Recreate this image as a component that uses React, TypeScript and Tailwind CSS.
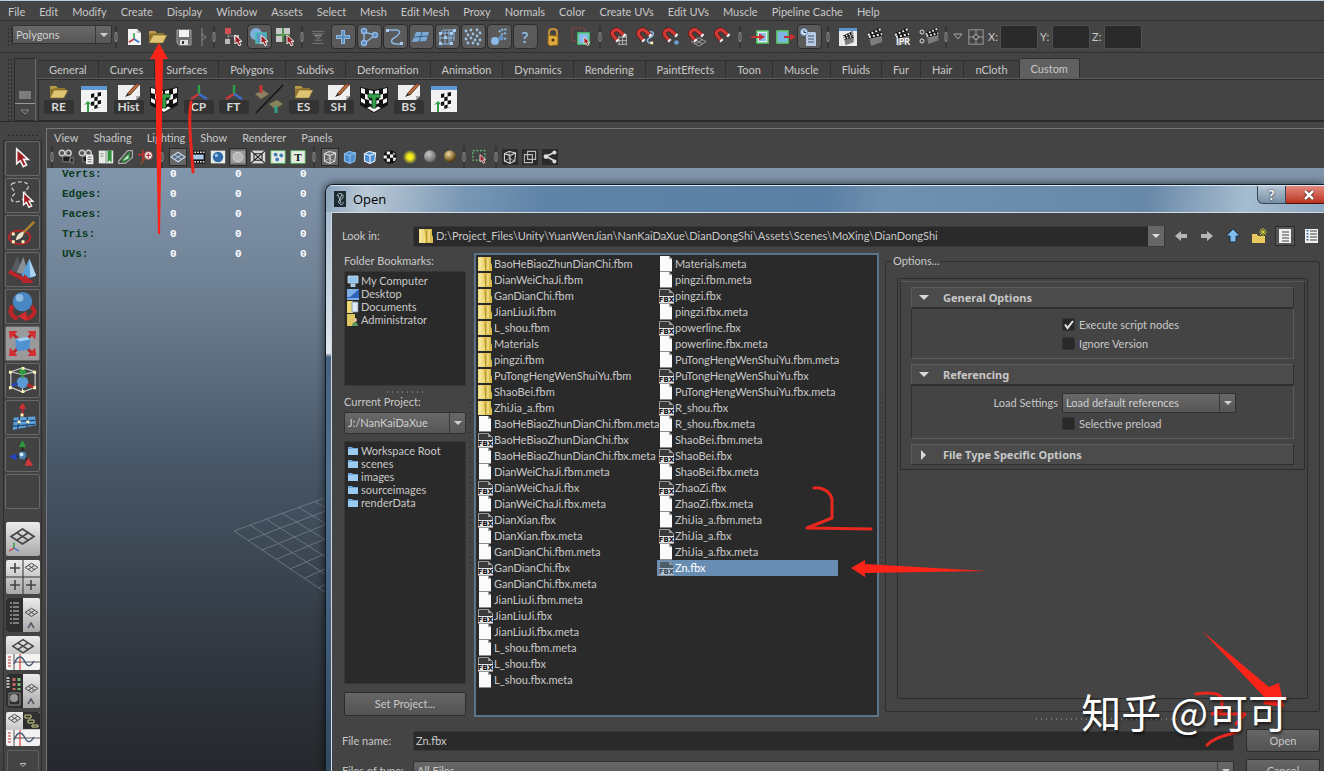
import type { ReactNode } from "react";
import clsx from "clsx";

/* ---------- data ---------- */

const mainMenu = [
  "File", "Edit", "Modify", "Create", "Display", "Window", "Assets", "Select", "Mesh",
  "Edit Mesh", "Proxy", "Normals", "Color", "Create UVs", "Edit UVs", "Muscle",
  "Pipeline Cache", "Help",
];

const shelfTabs = [
  "General", "Curves", "Surfaces", "Polygons", "Subdivs", "Deformation", "Animation",
  "Dynamics", "Rendering", "PaintEffects", "Toon", "Muscle", "Fluids", "Fur", "Hair",
  "nCloth", "Custom",
];

const panelMenu = ["View", "Shading", "Lighting", "Show", "Renderer", "Panels"];

const hudRows = ["Verts:", "Edges:", "Faces:", "Tris:", "UVs:"];

const fileColumns = [
  [
    "BaoHeBiaoZhunDianChi.fbm", "DianWeiChaJi.fbm", "GanDianChi.fbm", "JianLiuJi.fbm",
    "L_shou.fbm", "Materials", "pingzi.fbm", "PuTongHengWenShuiYu.fbm", "ShaoBei.fbm",
    "ZhiJia_a.fbm", "BaoHeBiaoZhunDianChi.fbm.meta", "BaoHeBiaoZhunDianChi.fbx",
    "BaoHeBiaoZhunDianChi.fbx.meta", "DianWeiChaJi.fbm.meta", "DianWeiChaJi.fbx",
    "DianWeiChaJi.fbx.meta", "DianXian.fbx", "DianXian.fbx.meta", "GanDianChi.fbm.meta",
    "GanDianChi.fbx", "GanDianChi.fbx.meta", "JianLiuJi.fbm.meta", "JianLiuJi.fbx",
    "JianLiuJi.fbx.meta", "L_shou.fbm.meta", "L_shou.fbx", "L_shou.fbx.meta",
  ],
  [
    "Materials.meta", "pingzi.fbm.meta", "pingzi.fbx", "pingzi.fbx.meta", "powerline.fbx",
    "powerline.fbx.meta", "PuTongHengWenShuiYu.fbm.meta", "PuTongHengWenShuiYu.fbx",
    "PuTongHengWenShuiYu.fbx.meta", "R_shou.fbx", "R_shou.fbx.meta", "ShaoBei.fbm.meta",
    "ShaoBei.fbx", "ShaoBei.fbx.meta", "ZhaoZi.fbx", "ZhaoZi.fbx.meta", "ZhiJia_a.fbm.meta",
    "ZhiJia_a.fbx", "ZhiJia_a.fbx.meta", "Zn.fbx",
  ],
];

const projectFolders = ["Workspace Root", "scenes", "images", "sourceimages", "renderData"];

/* ---------- icon pieces ---------- */

interface IconProps {
  children: ReactNode;
  className?: string;
  box?: string;
}

function Icon({ children, className = "size-5", box = "0 0 20 20" }: IconProps) {
  return (
    <svg className={clsx("shrink-0", className)} viewBox={box} fill="none" aria-hidden="true">
      {children}
    </svg>
  );
}

/** Red select arrow with a white rim, tip at x,y */
function Cursor({ x, y, s = 1 }: { x: number; y: number; s?: number }) {
  return (
    <path
      transform={`translate(${x} ${y}) scale(${s})`}
      d="M0 0v9l2.2-1.8 1.8 3.6 2-1-1.8-3.4H7z"
      fill="#a01c22"
      stroke="#f2f2f2"
      strokeWidth="1"
    />
  );
}

function Axes({ x, y, s = 1 }: { x: number; y: number; s?: number }) {
  return (
    <g transform={`translate(${x} ${y}) scale(${s})`} strokeWidth="2.4">
      <path d="M0 0V-9" stroke="#2fa043" />
      <path d="M0 0l-8 5" stroke="#c8383e" />
      <path d="M0 0l8 5" stroke="#3a6fd0" />
    </g>
  );
}

function Magnet() {
  return (
    <g>
      <path d="M7.500 13L4 9c-4-4 2-9 6-6l5 4.500" stroke="#5a1412" strokeWidth="5" />
      <path d="M7.500 13L4 9c-4-4 2-9 6-6l5 4.500" stroke="#cf3a34" strokeWidth="3.600" />
      <path d="M7.500 13l1.500 1.700M15 7.500l1.700 1.500" stroke="#f2f2f2" strokeWidth="4" />
    </g>
  );
}

function Diamond() {
  return (
    <g stroke="#474747" strokeWidth="1.3">
      <path d="M10 3l8.500 5.500-8.500 5.500L1.500 8.500z" />
      <path d="M5.800 5.800l8.400 5.400M14.200 5.800L5.800 11.200" />
    </g>
  );
}

function Clapper() {
  return (
    <g>
      <path d="M4 9l13-2v8L6 19z" fill="#7c7c7c" />
      <path d="M3 8l13-6M4 10l13-3" stroke="#111" strokeWidth="3.400" />
      <path d="M3 8l13-6M4 10l13-3" stroke="#eee" strokeWidth="2" strokeDasharray="2 2" />
    </g>
  );
}

function FolderOpen({ className = "size-5" }: { className?: string }) {
  return (
    <Icon className={className}>
      <path d="M1 4h6l2 2h7v3H1z" fill="#b99a45" />
      <path d="M1 7v9h1l4-8h10V6H9z" fill="#8d7430" />
      <path d="M1 16l4-8h14l-4 8z" fill="#dfc573" stroke="#7a6122" strokeWidth=".6" />
    </Icon>
  );
}

function Cube({ fill = "none", line = "#ddd" }: { fill?: string; line?: string }) {
  return (
    <g fill={fill} stroke={line} strokeWidth="1.3" strokeLinejoin="round">
      <path d="M3 6l6-3 8 2-1 10-6 3-7-3z" />
      <path d="M3 6l7 2 7-3M10 8v10" />
      {fill === "none" && <path d="M9 3v9l-6 3M9 12l7 3" strokeWidth=".7" />}
    </g>
  );
}

function Ball({ id, from, to }: { id: string; from: string; to: string }) {
  return (
    <Icon className="size-4">
      <defs>
        <radialGradient id={id} cx=".38" cy=".32" r=".7">
          <stop offset="0" stopColor={from} />
          <stop offset="1" stopColor={to} />
        </radialGradient>
      </defs>
      <circle cx="10" cy="9" r="7.500" fill={`url(#${id})`} />
    </Icon>
  );
}

/* ---------- main toolbar ---------- */

function Separator({ className = "w-2" }: { className?: string }) {
  return (
    <span className={clsx("flex shrink-0 justify-center", className)}>
      <svg className="h-6 w-2" viewBox="0 0 8 24" fill="none" aria-hidden="true">
        <path d="M4 1v22" stroke="#262626" />
        <path d="M3 9v6l1 2 1-2V9L4 7z" stroke="#8c8c8c" fill="#3c3c3c" />
      </svg>
    </span>
  );
}

interface ToolProps {
  label: string;
  className?: string;
  pressed?: boolean;
  children: ReactNode;
}

function Tool({ label, className = "w-[26px]", pressed, children }: ToolProps) {
  return (
    <button
      type="button"
      title={label}
      aria-label={label}
      className={clsx("flex h-7 shrink-0 items-center justify-center", className)}
    >
      <span
        className={clsx(
          "flex size-[25px] shrink-0 items-center justify-center rounded-sm",
          pressed && "border border-[#2c2c2c] bg-[#5a5a5a]",
        )}
      >
        {children}
      </span>
    </button>
  );
}

function ComboArrow({ className = "w-4" }: { className?: string }) {
  return (
    <span
      className={clsx(
        "pointer-events-none absolute inset-y-0 right-0 flex items-center justify-center border-l border-[#383838]",
        className,
      )}
    >
      <svg className="h-1 w-2" viewBox="0 0 8 4" aria-hidden="true">
        <path d="M0 0h8L4 4z" fill="#d0d0d0" />
      </svg>
    </span>
  );
}

interface ComboProps {
  id: string;
  label: string;
  value: string;
  className?: string;
}

function Combo({ id, label, value, className }: ComboProps) {
  return (
    <div
      className={clsx(
        "relative rounded-xs border border-[#303030] bg-linear-to-b from-[#686868] to-[#565656]",
        className,
      )}
    >
      <select
        id={id}
        aria-label={label}
        defaultValue={value}
        className="block size-full appearance-none px-[3px] text-[#cfcfcf] outline-none"
      >
        <option>{value}</option>
      </select>
      <ComboArrow />
    </div>
  );
}

const snapTools: { label: string; extra: ReactNode }[] = [
  { label: "Snap to grids", extra: <path d="M9 10h10M9 14h10M9 18h10M10 10v9M14 7v12M18 7v12" stroke="#bbb" /> },
  {
    label: "Snap to curves",
    extra: (
      <>
        <path d="M13 5c9-3 7 4 2 6-4 2-3 6 3 6" stroke="#8ab6e0" strokeWidth="1.700" />
        <path d="M16 15h3v3h-3z" fill="#fff6b0" />
      </>
    ),
  },
  { label: "Snap to points", extra: <circle cx="16" cy="16" r="2.500" fill="#6d9fd0" /> },
  { label: "Snap to view planes", extra: <path d="M4 15l8-4 8 4-8 5zM8 13l8 4.500M16 13l-8 4.500" stroke="#aaa" /> },
  { label: "Make live", extra: null },
];

const maskTools: { label: string; icon: ReactNode }[] = [
  {
    label: "Handles",
    icon: (
      <>
        <path d="M10 3v14M3 10h14" stroke="#8bb8e4" strokeWidth="4" />
        <path d="M10 4v12M4 10h12" stroke="#5783b0" strokeWidth="1.500" />
      </>
    ),
  },
  {
    label: "Joints",
    icon: (
      <g stroke="#8bb8e4" strokeWidth="1.500">
        <path d="M5 4v12M5 5l11 3M16 8L6 16" />
        <g fill="#5b88b8">
          <circle cx="5" cy="4" r="2.500" />
          <circle cx="16" cy="8" r="2.500" />
          <circle cx="5" cy="16" r="2.500" />
        </g>
      </g>
    ),
  },
  {
    label: "Curves",
    icon: (
      <g>
        <path d="M2 3h8c9 0 3 6-1 8s-3 6 2 6h5" stroke="#8bb8e4" strokeWidth="1.400" />
        <path d="M1 2h3v3H1zM15 15h3v3h-3z" fill="#a9cdf0" />
      </g>
    ),
  },
  {
    label: "Surfaces",
    icon: (
      <g>
        <path d="M5 5h13l-3 9-14 1z" fill="#7ba9d6" />
        <path d="M3 10l14-1M11 5l-3 10" stroke="#3e5f83" />
      </g>
    ),
  },
  {
    label: "Deformations",
    icon: (
      <g>
        <path d="M3 6h11v11H3zM6 3h11v11M3 11h14M8 4v13M12 3v14M14 6l3-3M3 6l3-3" stroke="#8bb8e4" />
        <path d="M2 5h3v3H2zM13 5h3v3h-3zM2 15h3v3H2zM13 15h3v3h-3zM16 2h3v3h-3zM7 9h3v3H7z" fill="#a9cdf0" />
      </g>
    ),
  },
  {
    label: "Dynamics",
    icon: (
      <g fill="#9cc4ea">
        {[[3, 4], [8, 3], [14, 3], [17, 6], [5, 8], [10, 7], [14, 9], [3, 12], [8, 11], [12, 13], [17, 13], [5, 16], [10, 16], [15, 17]].map(
          ([x, y]) => (
            <circle key={`${x}-${y}`} cx={x} cy={y} r="1.400" />
          ),
        )}
      </g>
    ),
  },
  {
    label: "Rendering",
    icon: (
      <g>
        <circle cx="6" cy="14" r="4" fill="#8bb8e4" />
        <circle cx="12" cy="11" r="2.500" fill="#5e8fc0" />
        <path d="M10 5c3-3 6-3 8-2M12 8c3-2 5-2 6-1M15 12l3-1" stroke="#8bb8e4" strokeWidth="2" strokeDasharray="2 1" />
      </g>
    ),
  },
  {
    label: "Miscellaneous",
    icon: (
      <text x="10" y="16" textAnchor="middle" fontSize="16" fontWeight="700" fill="#8bb8e4">
        ?
      </text>
    ),
  },
];

function StatusLine() {
  return (
    <div className="flex h-[33px] shrink-0 items-center overflow-hidden border-y border-t-[#2e2e2e] border-b-[#303030]">
      <Grip className="ml-[7px] w-[5px]" />
      <Combo id="menu-set" label="Menu set" value="Polygons" className="mb-1 h-[19px] w-[100px]" />
      <Separator />
      <Tool label="New scene" className="w-7">
        <Icon>
          <path d="M4 2h9l4 4v12H4z" fill="#f4f4f4" />
          <path d="M13 2v4h4" fill="#bbb" />
          <Axes x={10} y={12} s={0.65} />
        </Icon>
      </Tool>
      <Tool label="Open scene" className="w-5">
        <FolderOpen />
      </Tool>
      <Tool label="Save scene" className="w-8">
        <Icon>
          <path d="M3 3h14v15H5l-2-2z" fill="#6f6f6f" stroke="#a0a0a0" />
          <path d="M5 3h10v7H5z" fill="#f0f0f0" />
          <path d="M6 13h8v5H6z" fill="#ddd" />
          <path d="M8 14h2v3H8z" fill="#333" />
        </Icon>
      </Tool>
      <span className="flex w-2 justify-center">
        <svg className="h-5 w-2" viewBox="0 0 8 20" fill="none" aria-hidden="true">
          <path d="M2 1v18M2 7l4 3-4 3" stroke="#8a8a8a" />
        </svg>
      </span>
      <Separator className="w-3" />
      <Tool label="Select by hierarchy">
        <Icon>
          <path d="M2 1h6v6H2z" fill="#d05055" />
          <path d="M2 12h5v5H2zM11 8h5v5h-5z" fill="#bbb" />
          <path d="M5 7v5M5 9h6" stroke="#888" />
          <Cursor x={12} y={8} />
        </Icon>
      </Tool>
      <Tool label="Select by object type" pressed>
        <Icon>
          <circle cx="7" cy="7" r="6" fill="#7fb0dc" />
          <path d="M7 6h10v10H7z" fill="#5f95c8" stroke="#48c0b0" strokeWidth="1.500" />
          <Cursor x={12} y={8} />
        </Icon>
      </Tool>
      <Tool label="Select by component type">
        <Icon>
          <path d="M1 1h6v6H1zM9 1h6v6H9zM1 9h6v6H1z" fill="#c8c8c8" />
          <path d="M1 8h14M8 1v14" stroke="#58a858" strokeWidth="1.500" />
          <Cursor x={12} y={8} />
        </Icon>
      </Tool>
      <Separator />
      <Tool label="Set object selection mask" className="w-6">
        <Icon className="size-4">
          <path d="M3 3h14M3 6h14M5 14h10M3 18h14" stroke="#888" />
          <path d="M6 8h8l-4 4z" stroke="#aaa" />
        </Icon>
      </Tool>
      {maskTools.map((tool) => (
        <Tool key={tool.label} label={tool.label} pressed>
          <Icon>{tool.icon}</Icon>
        </Tool>
      ))}
      <Tool label="Lock selection" className="w-[30px]">
        <Icon>
          <path d="M6 10V5c0-4 8-4 8 0v5" stroke="#c8923a" strokeWidth="2" />
          <path d="M5 8l10 1v9l-8 1-2-2z" fill="#e0a93e" stroke="#8a5f18" />
          <circle cx="10" cy="13" r="1.500" fill="#4b330c" />
        </Icon>
      </Tool>
      <Tool label="Highlight selection mode">
        <Icon>
          <path d="M1 1h13v13H1z" stroke="#b04045" strokeDasharray="2 1.500" />
          <path d="M7 6h11v11H7z" fill="#86b9ec" stroke="#4fd07a" strokeWidth="1.500" />
          <Cursor x={13} y={10} s={0.8} />
        </Icon>
      </Tool>
      <Separator className="w-3" />
      {snapTools.map((tool) => (
        <Tool key={tool.label} label={tool.label}>
          <Icon box="-1 -1 22 22">
            {tool.extra}
            <Magnet />
          </Icon>
        </Tool>
      ))}
      <Separator />
      <Tool label="Inputs" className="w-8">
        <Icon>
          <path d="M7 4h11v12H7z" fill="#dfeefa" stroke="#5fce6c" strokeWidth="1.600" />
          <path d="M9 6h7v8H9z" fill="#8dbce6" />
          <path d="M1 10h9" stroke="#c32f33" strokeWidth="2" />
          <path d="M9 6.500l6 3.500-6 3.500z" fill="#c32f33" />
        </Icon>
      </Tool>
      <Tool label="Outputs" className="w-5">
        <Icon>
          <path d="M1 4h11v12H1z" fill="#7db4e6" stroke="#5fce6c" strokeWidth="1.600" />
          <path d="M8 10h7" stroke="#c32f33" strokeWidth="2" />
          <path d="M14 6.500l6 3.500-6 3.500z" fill="#c32f33" />
        </Icon>
      </Tool>
      <Tool label="Construction history" pressed>
        <Icon>
          <path d="M7 5h9l1 1v13H7z" fill="#b9cbe0" />
          <path d="M9 9h6M9 12h6M9 15h6" stroke="#3b5878" />
          <circle cx="5" cy="5" r="3.500" fill="#cfe2f5" stroke="#6a92bd" />
          <path d="M5 3v2.500h2" stroke="#234" />
        </Icon>
      </Tool>
      <Separator className="w-3" />
      <Tool label="Render view" className="w-[27px]">
        <Icon>
          <path d="M1 1h18v18H1z" fill="#ececec" />
          <path d="M1 1h18v3H1z" fill="#5c94cc" />
          <g transform="translate(3 4) scale(.75)">
            <Clapper />
          </g>
        </Icon>
      </Tool>
      <Tool label="Render current frame" className="w-[27px]">
        <Icon>
          <Clapper />
        </Icon>
      </Tool>
      <Tool label="IPR render" className="w-[27px]">
        <Icon>
          <Clapper />
          <text x="11" y="18" textAnchor="middle" fontSize="9" fontWeight="700" fill="#f4f4f4">
            IPR
          </text>
        </Icon>
      </Tool>
      <Tool label="Render settings" className="w-[27px]">
        <Icon>
          <g transform="translate(4 0) scale(.9)">
            <Clapper />
          </g>
          <circle cx="3" cy="5" r="2" stroke="#ddd" />
          <circle cx="3" cy="14" r="2" stroke="#ddd" />
        </Icon>
      </Tool>
      <Separator />
      <Tool label="Input line mode" className="w-4">
        <Icon className="h-2 w-3" box="0 0 12 8">
          <path d="M2 1h8L6 6z" stroke="#aaa" />
        </Icon>
      </Tool>
      <Tool label="Absolute transform" className="w-5">
        <Icon className="size-4">
          <path d="M1 1h18v18H1zM10 1v18M1 10h18" stroke="#b0b0b0" />
          <circle cx="10" cy="10" r="3" fill="#444" stroke="#ccc" />
        </Icon>
      </Tool>
      {["X", "Y", "Z"].map((axis) => (
        <label key={axis} className="flex shrink-0 items-center">
          <span className="w-[14px] pl-[2px]">{axis}:</span>
          <input
            type="text"
            aria-label={`${axis} value`}
            className="h-6 w-[38px] rounded-xs border border-[#4f4f4f] bg-[#2a2a2a]"
          />
        </label>
      ))}
    </div>
  );
}

function Grip({ className }: { className?: string }) {
  return (
    <span
      className={clsx(
        "h-5 shrink-0 bg-[radial-gradient(circle,#2a2a2a_1px,transparent_1px)] bg-[size:3px_4px]",
        className,
      )}
    />
  );
}

/* ---------- shelf ---------- */

function PencilIcon() {
  return (
    <Icon className="h-4 w-6" box="0 0 24 16">
      <path d="M1 1h22v11l-4 4H1z" fill="#efefef" />
      <path d="M23 12h-4v4z" fill="#aaa" />
      <path d="M10 10l9-10h4L13 11z" fill="#b86a3c" stroke="#4c2411" strokeWidth=".8" />
      <path d="M8 13l2-3 3 1z" fill="#222" />
    </Icon>
  );
}

function UvWindowIcon() {
  return (
    <Icon className="size-[28px]" box="0 0 28 28">
      <path d="M1 1h26v26H1z" fill="#f2f2f2" />
      <path d="M1 1h26v4H1z" fill="#5e98d2" />
      <path d="M11 9l10-2v15l-10 3z" fill="#111" />
      <path d="M14.300 8.300l3.300-.700v4l-3.300.7zM11 13l3.300-.700v4l-3.300.8zM17.600 11.600l3.400-.700v4l-3.400.8zM14.300 16.300l3.300-.700v4l-3.300.8zM11 21l3.300-.800v4L11 25zM17.600 19.600l3.400-.800V22l-3.400 1z" fill="#fff" />
      <path d="M4 20l4-4 4 4-3-1v8H7v-8z" fill="#2f9b45" />
    </Icon>
  );
}

function CheckerCubeIcon() {
  return (
    <Icon className="size-[30px]" box="0 0 30 30">
      <path d="M1 3l14 3 14-3v18l-14 8L1 21z" fill="#111" />
      <g fill="#f4f4f4">
        <path d="M2 4l4 1v5l-4-1zM10 6l4 1v4l-4-1zM6 10l4 1v5l-4-1zM2 14l4 2v4l-4-2zM10 16l4 1v4l-4-2z" />
        <path d="M28 4l-4 1v5l4-1zM20 6l-4 1v4l4-1zM24 10l-4 1v5l4-1zM28 14l-4 2v4l4-2zM20 16l-4 1v4l4-2z" />
        <path d="M15 24l4-1.500 3 1.500-7 4-7-4 3-1.500z" />
      </g>
      <path d="M9 10h12v4h-4v10h-4V14H9z" fill="#35a04a" stroke="#0d3c18" strokeWidth=".8" />
    </Icon>
  );
}

function AxesIcon() {
  return (
    <Icon className="h-[18px] w-5" box="0 0 20 18">
      <Axes x={10} y={11} />
    </Icon>
  );
}

const shelfItems: { label: string; caption?: string; icon: ReactNode }[] = [
  { label: "Reference", caption: "RE", icon: <FolderOpen /> },
  { label: "UV Texture Editor", icon: <UvWindowIcon /> },
  { label: "Delete history", caption: "Hist", icon: <PencilIcon /> },
  { label: "Checker", icon: <CheckerCubeIcon /> },
  { label: "Center pivot", caption: "CP", icon: <AxesIcon /> },
  { label: "Freeze transformations", caption: "FT", icon: <AxesIcon /> },
  {
    label: "Flip normals",
    icon: (
      <Icon className="size-[30px]" box="0 0 30 30">
        <path d="M29 1L2 29" stroke="#151515" strokeWidth="1.500" />
        <path d="M1 10l8-4 6 4-8 5z" fill="#8b7f62" />
        <path d="M7 1v8" stroke="#c83436" strokeWidth="3" />
        <path d="M15 20l8-4 6 4-8 5z" fill="#8b8258" />
        <path d="M22 22v7" stroke="#2fa083" strokeWidth="3" />
      </Icon>
    ),
  },
  { label: "Export selection", caption: "ES", icon: <FolderOpen /> },
  { label: "Shape", caption: "SH", icon: <PencilIcon /> },
  { label: "Checker cube", icon: <CheckerCubeIcon /> },
  { label: "Blend shape", caption: "BS", icon: <PencilIcon /> },
  { label: "UV snapshot", icon: <UvWindowIcon /> },
];

function Shelf() {
  return (
    <div className="flex h-[69px] shrink-0 border-b border-[#2b2b2b] pt-[5px]">
      <Grip className="ml-[7px] h-16 w-[5px]" />
      <div className="ml-[2px] flex w-[22px] shrink-0 flex-col border border-[#2c2c2c] border-r-[#6a6a6a]">
        <div className="flex flex-1 items-end justify-center border-b border-[#999] pb-1">
          <span className="h-2 w-3 bg-[#7c7c7c]" />
        </div>
        <div className="flex h-4 items-center justify-center">
          <svg className="h-[6px] w-[10px]" viewBox="0 0 10 6" fill="none" aria-hidden="true">
            <path d="M1 1h8L5 5z" stroke="#888" />
          </svg>
        </div>
      </div>
      <div className="ml-[2px] flex min-w-0 flex-1 flex-col">
        <div className="flex h-[21px] items-end border-b border-[#5d5d5d]">
          {shelfTabs.map((tab) => (
            <button
              key={tab}
              type="button"
              className={clsx(
                "border-t border-r border-[#2f2f2f] px-[11px]",
                tab === "Custom" ? "h-5 rounded-t-xs bg-[#606060]" : "h-[18px] bg-[#404040]",
              )}
            >
              {tab}
            </button>
          ))}
        </div>
        <div className="flex flex-1 items-start border-y border-l border-[#2b2b2b] pt-[3px] pl-[2px]">
          {shelfItems.map((item) => (
            <button
              key={item.label}
              type="button"
              title={item.label}
              aria-label={item.label}
              className="flex h-8 w-[35px] shrink-0 flex-col items-center justify-center"
            >
              {item.caption ? (
                <>
                  <span className="flex h-4 items-center">{item.icon}</span>
                  <span className="w-[30px] rounded-xs bg-[#333] text-[12px] leading-[14px] font-bold text-[#d8d8d8]">
                    {item.caption}
                  </span>
                </>
              ) : (
                item.icon
              )}
            </button>
          ))}
        </div>
      </div>
    </div>
  );
}

/* ---------- toolbox ---------- */

const toolboxTools: { label: string; icon: ReactNode }[] = [
  { label: "Select tool", icon: <Cursor x={11} y={7} s={1.7} /> },
  {
    label: "Lasso tool",
    icon: (
      <>
        <path d="M6 5c6-3 18-3 17 3-1 5-5 1-3 8 1 6-12 10-14 6-2-5 6-6 2-10-2-3-4-5-2-7z" stroke="#ccc" strokeWidth="1.300" strokeDasharray="4 2.500" />
        <Cursor x={18} y={14} s={1.4} />
      </>
    ),
  },
  {
    label: "Paint selection tool",
    icon: (
      <>
        <ellipse cx="14" cy="22" rx="11" ry="7" stroke="#b5262a" strokeWidth="2" />
        <path d="M29 6L17 18" stroke="#b08030" strokeWidth="2.500" />
        <path d="M10 25c1-6 4-8 8-9 1 4-2 8-8 9z" fill="#e8e2c8" />
        <path d="M6 17h3v3H6zM6 25h3v3H6zM16 25h3v3h-3z" fill="#fff6b8" />
      </>
    ),
  },
  {
    label: "Move tool",
    icon: (
      <>
        <path d="M12 3L5 18l12 4z" fill="#555b60" />
        <path d="M18 4l-7 16 12 3z" fill="#8a9096" />
        <path d="M24 6l-8 17c4 4 11 3 15 0z" fill="#5a9fd6" />
        <path d="M24 6l1 19c3 0 5-1 6-2z" fill="#a9d4f4" />
        <path d="M3 19l15 8" stroke="#b92529" strokeWidth="4" />
        <path d="M16 31l3-9 10 9z" fill="#b92529" />
      </>
    ),
  },
  {
    label: "Rotate tool",
    icon: (
      <>
        <path d="M7 16c-5 6 0 13 5 13M26 17c8 6 0 13-8 12" stroke="#b92529" strokeWidth="4.500" />
        <circle cx="17" cy="12" r="10" fill="#4887c2" />
        <circle cx="14" cy="8" r="4" fill="#a6cff0" opacity=".7" />
        <path d="M12 27l9-5v10z" fill="#d32f33" />
      </>
    ),
  },
  {
    label: "Scale tool",
    icon: (
      <>
        <path d="M6 6l22 22M28 6L6 28" stroke="#b92529" strokeWidth="3" />
        <path d="M3 4h9l-8 9zM31 4h-9l8 9zM3 30h9l-8-9zM31 30h-9l8-9z" fill="#d32f33" />
        <path d="M10 12l12-2 3 3-1 10-11 2-3-3z" fill="#4f93d2" />
        <path d="M10 12l12-2 3 3-11 2z" fill="#9fcdf2" />
      </>
    ),
  },
  {
    label: "Universal manipulator",
    icon: (
      <>
        <path d="M5 8l12-4 13 4v16l-13 5-12-5zM5 8l12 3 13-3M17 11v18" stroke="#ccc" strokeWidth="1.200" />
        <circle cx="17" cy="19" r="6" fill="#5b9ad4" />
        <path d="M17 15V6M14 9l3-5 3 5z" stroke="#2f9b3c" strokeWidth="2" fill="#2f9b3c" />
        <path d="M12 20l-6 2" stroke="#2c48b8" strokeWidth="3" />
        <path d="M22 21l6 3" stroke="#b92529" strokeWidth="3" />
        <path d="M3 7h3v3H3zM28 7h3v3h-3zM3 23h3v3H3zM28 23h3v3h-3zM16 3h3v3h-3zM16 27h3v3h-3z" fill="#fff6b8" />
      </>
    ),
  },
  {
    label: "Soft modification tool",
    icon: (
      <>
        <path d="M8 17l22-1 1 9-24 5z" fill="#5d9fd8" />
        <path d="M6 21l24-1M5 26l25-2M14 16l-2 13M22 16v11" stroke="#234468" strokeWidth="1.300" />
        <path d="M17 15V7" stroke="#b92529" strokeWidth="2" />
        <path d="M13 8l4-6 4 6z" fill="#d32f33" />
        <path d="M15 13h3v3h-3zM12 20h3v3h-3zM21 20h3v3h-3z" fill="#fff6b8" />
      </>
    ),
  },
  {
    label: "Show manipulator tool",
    icon: (
      <>
        <path d="M17 18V8M17 18l-7 1M17 18l7 6" stroke="#222" strokeWidth="2" />
        <path d="M14 9l3-6 3 6z" fill="#2f9b3c" stroke="#2f9b3c" />
        <path d="M11 16l-8 3 8 4z" fill="#2444c0" />
        <path d="M23 21l4 7-7 0z" fill="#d3383c" stroke="#d3383c" />
        <circle cx="17" cy="18" r="4" fill="#4d7ea8" />
        <circle cx="16" cy="17" r="2" fill="#cfe6fa" />
      </>
    ),
  },
  { label: "Last tool", icon: null },
];

function GraphStrip() {
  return (
    <g>
      <path d="M0 0h34v16H0z" fill="#f3f3f3" />
      <path d="M2 3h3M2 6h3M2 9h3M2 12h3" stroke="#c33" />
      <path d="M8 0v16M8 8h26" stroke="#555" />
      <path d="M14 0v16" stroke="#d22" />
      <path d="M8 10c4-10 8-8 11-2s6 4 9-1" stroke="#455a70" strokeWidth="1.400" />
    </g>
  );
}

function MiniGrid({ x, y, s = 0.8 }: { x: number; y: number; s?: number }) {
  return (
    <g transform={`translate(${x} ${y}) scale(${s})`}>
      <Diamond />
    </g>
  );
}

const layoutButtons: { label: string; icon: ReactNode }[] = [
  {
    label: "Single perspective view",
    icon: (
      <>
        <MiniGrid x={3} y={3} s={1.35} />
        <Axes x={8} y={26} s={0.6} />
      </>
    ),
  },
  {
    label: "Four view",
    icon: (
      <>
        <path d="M9 3v10M4 8h10M9 20v10M4 25h10M25 20v10M20 25h10" stroke="#444" strokeWidth="1.600" />
        <MiniGrid x={18} y={1} s={0.75} />
        <path d="M17 0v34M0 17h34" stroke="#333" />
      </>
    ),
  },
  {
    label: "Outliner and perspective",
    icon: (
      <>
        <path d="M0 0h17v34H0z" fill="#2f2f2f" />
        <path d="M4 5h9M4 9h9M4 13h9M4 17h9M4 21h9M4 25h9" stroke="#ccc" strokeDasharray="2 1 6" />
        <MiniGrid x={18} y={8} s={0.75} />
        <path d="M22 30l3-5 3 5" stroke="#556" strokeWidth="1.500" />
      </>
    ),
  },
  {
    label: "Perspective and graph",
    icon: (
      <>
        <MiniGrid x={5} y={0} s={1.2} />
        <g transform="translate(0 18)">
          <GraphStrip />
        </g>
      </>
    ),
  },
  {
    label: "Hypershade and perspective",
    icon: (
      <>
        <path d="M0 0h17v34H0z" fill="#2f2f2f" />
        <path d="M2 3v12" stroke="#bbb" strokeWidth="3" strokeDasharray="2 1" />
        <path d="M8 4v12" stroke="#c66" strokeWidth="3" strokeDasharray="3 2" />
        <path d="M13 4v12" stroke="#7b7" strokeWidth="3" strokeDasharray="3 2" />
        <circle cx="8" cy="24" r="4" fill="#999" />
        <path d="M3 19h11v12H3z" stroke="#888" />
        <MiniGrid x={18} y={8} s={0.75} />
        <path d="M22 30l3-5 3 5" stroke="#556" strokeWidth="1.500" />
      </>
    ),
  },
  {
    label: "Perspective, hypergraph and graph",
    icon: (
      <>
        <path d="M17 0h17v17H17z" fill="#2f2f2f" />
        <path d="M19 3h6v3h-6zM22 8h6v3h-6zM26 13h6v2h-6z" stroke="#cfcf8a" />
        <MiniGrid x={1} y={0} s={0.75} />
        <g transform="translate(0 18)">
          <GraphStrip />
        </g>
      </>
    ),
  },
];

function Toolbox() {
  return (
    <aside className="flex w-[46px] shrink-0 flex-col overflow-hidden pt-3 pl-[3px]">
      <span className="mb-[2px] ml-1 h-1 w-8 shrink-0 bg-[radial-gradient(circle,#2a2a2a_1px,transparent_1px)] bg-[size:4px_3px]" />
      <div className="flex w-[39px] flex-1 flex-col items-center border border-[#2e2e2e]">
        <div className="flex flex-col gap-[2px]">
          {toolboxTools.map((tool) => (
            <button
              key={tool.label}
              type="button"
              title={tool.label}
              aria-label={tool.label}
              className={clsx(
                "size-[35px] rounded-xs border border-[#686868]",
                tool.label === "Scale tool" ? "bg-[#9a9a9a]" : "bg-[#424242]",
              )}
            >
              <Icon className="size-[33px]" box="0 0 34 34">
                {tool.icon}
              </Icon>
            </button>
          ))}
        </div>
        <div className="mt-[13px] flex flex-col gap-1">
          {layoutButtons.map((button) => (
            <button
              key={button.label}
              type="button"
              title={button.label}
              aria-label={button.label}
              className="size-[34px] overflow-hidden rounded-xs bg-linear-to-b from-[#ececec] to-[#a8a8a8]"
            >
              <Icon className="size-[34px]" box="0 0 34 34">
                {button.icon}
              </Icon>
            </button>
          ))}
        </div>
        <button
          type="button"
          aria-label="More layouts"
          className="mt-1 flex h-8 w-8 shrink-0 justify-center rounded-xs border border-[#606060] pt-3"
        >
          <svg className="h-1 w-[6px]" viewBox="0 0 6 4" fill="none" aria-hidden="true">
            <path d="M0 .5h6L3 3.500z" stroke="#bbb" />
          </svg>
        </button>
      </div>
    </aside>
  );
}

/* ---------- viewport ---------- */

function PanelTool({ label, className = "w-5", pressed, children }: ToolProps) {
  return (
    <button
      type="button"
      title={label}
      aria-label={label}
      className={clsx("flex h-[18px] shrink-0 items-center justify-center", className)}
    >
      <span
        className={clsx(
          "flex size-[18px] items-center justify-center",
          pressed && "border border-[#2a2a2a] bg-[#666]",
        )}
      >
        {children}
      </span>
    </button>
  );
}

function Tile({ children, fill = "#e4ece4" }: { children: ReactNode; fill?: string }) {
  return (
    <Icon className="size-4">
      <path d="M1 2h18v16H1z" fill={fill} />
      {children}
    </Icon>
  );
}

function CameraShape() {
  return (
    <>
      <circle cx="5" cy="5" r="3.500" fill="#555" stroke="#ccc" strokeWidth="1.800" />
      <circle cx="13" cy="5" r="3.500" fill="#555" stroke="#ccc" strokeWidth="1.800" />
      <path d="M6 9h9v7H6zM15 12l4-2v8l-4-2z" fill="#1c1c1c" stroke="#aaa" strokeWidth=".8" />
    </>
  );
}

function PanelToolbar() {
  return (
    <div className="flex h-[21px] shrink-0 items-center pb-[2px] pl-px">
      <Separator />
      <PanelTool label="Select camera">
        <Icon className="size-4">
          <CameraShape />
        </Icon>
      </PanelTool>
      <PanelTool label="Camera attributes">
        <Icon className="size-4">
          <CameraShape />
          <path d="M10 7h9v12h-9z" fill="#eee" />
          <path d="M12 10h5M12 13h5M12 16h5" stroke="#555" />
        </Icon>
      </PanelTool>
      <PanelTool label="Bookmarks">
        <Tile>
          <path d="M10 2v16M3 6h4M3 9h4" stroke="#777" />
          <path d="M12 2h5v15l-2.500-3-2.500 3z" fill="#2f8f3f" />
        </Tile>
      </PanelTool>
      <PanelTool label="Image plane">
        <Icon className="size-4">
          <path d="M1 15L12 2h6v9L9 18H1z" stroke="#aaa" strokeWidth="1.500" />
          <path d="M6 13l8-8v7l-8 4z" fill="#d8e8d8" stroke="#2f8f3f" strokeWidth="1.800" />
        </Icon>
      </PanelTool>
      <PanelTool label="2D pan/zoom">
        <Icon className="size-4">
          <path d="M6 1v13M0 7h12" stroke="#c03236" strokeWidth="2" />
          <circle cx="13" cy="8" r="5" fill="#f0f0f0" stroke="#a33" />
          <path d="M10 8h6M13 5v6" stroke="#b33" strokeWidth="1.500" />
          <path d="M9 12l-6 7" stroke="#8a4a2a" strokeWidth="2" />
        </Icon>
      </PanelTool>
      <Separator className="w-3" />
      <PanelTool label="Grid" pressed>
        <Icon className="size-4">
          <path d="M10 4l9 6-9 6-9-6z" fill="#5a6c80" stroke="#cddcec" strokeWidth="1.300" />
          <path d="M5.500 7l9 6M14.500 7l-9 6" stroke="#cddcec" />
        </Icon>
      </PanelTool>
      <PanelTool label="Film gate">
        <Icon className="size-4">
          <path d="M1 2h18v16H1z" fill="#111" />
          <path d="M2 4h16M2 16h16" stroke="#eee" strokeWidth="2" strokeDasharray="2 1.500" />
          <path d="M3 7h14v6H3z" fill="#a9c8e8" />
        </Icon>
      </PanelTool>
      <PanelTool label="Resolution gate">
        <Tile>
          <circle cx="10" cy="10" r="6.500" fill="#2f6bab" />
          <circle cx="8" cy="8" r="2" fill="#9dc6ee" />
        </Tile>
      </PanelTool>
      <PanelTool label="Gate mask" pressed>
        <Tile fill="#9a9a9a">
          <circle cx="10" cy="10" r="6" fill="#b8b8b8" stroke="#ddd" />
        </Tile>
      </PanelTool>
      <PanelTool label="Field chart">
        <Tile fill="#d8d8d8">
          <path d="M1 2l18 16M19 2L1 18M5 6h10v8H5z" stroke="#222" strokeWidth="1.300" />
        </Tile>
      </PanelTool>
      <PanelTool label="Safe action">
        <Tile>
          <circle cx="7" cy="7" r="2.300" fill="#3d7ab8" />
          <circle cx="14" cy="8" r="2.300" fill="#3d7ab8" />
          <circle cx="9" cy="13" r="2.300" fill="#3d7ab8" />
          <path d="M1 2h18v16H1z" stroke="#4caf50" />
        </Tile>
      </PanelTool>
      <PanelTool label="Safe title">
        <Tile>
          <text
            x="10"
            y="15"
            textAnchor="middle"
            fontSize="14"
            fontWeight="700"
            fontFamily="Liberation Serif, serif"
            fill="#111"
          >
            T
          </text>
          <path d="M1 2h18v16H1z" stroke="#4caf50" />
        </Tile>
      </PanelTool>
      <Separator className="w-3" />
      <PanelTool label="Wireframe" pressed>
        <Icon className="size-4">
          <Cube />
        </Icon>
      </PanelTool>
      <PanelTool label="Smooth shade all">
        <Icon className="size-4">
          <Cube fill="#4c8fd0" line="#8fc0ee" />
        </Icon>
      </PanelTool>
      <PanelTool label="Wireframe on shaded">
        <Icon className="size-4">
          <Cube fill="#4c8fd0" line="#f0f6fc" />
        </Icon>
      </PanelTool>
      <PanelTool label="Textured">
        <Icon className="size-4">
          <circle cx="10" cy="10" r="8.500" fill="#111" />
          <path d="M6 3h4v4H6zM10 7h4v4h-4zM2 8h4v4H2zM6 12h4v4H6zM14 4l3 3h-3zM14 11h4l-2 4h-2z" fill="#f2f2f2" />
        </Icon>
      </PanelTool>
      <PanelTool label="Use all lights">
        <Icon className="size-4">
          <defs>
            <radialGradient id="light-glow">
              <stop offset=".35" stopColor="#f4f01c" />
              <stop offset="1" stopColor="#f4f01c" stopOpacity="0" />
            </radialGradient>
          </defs>
          <circle cx="10" cy="10" r="9" fill="url(#light-glow)" />
        </Icon>
      </PanelTool>
      <PanelTool label="Shadows">
        <Ball id="ball-shadow" from="#c8c8c8" to="#666" />
      </PanelTool>
      <PanelTool label="High quality">
        <Ball id="ball-gold" from="#f6dc9a" to="#4a3208" />
      </PanelTool>
      <Separator />
      <PanelTool label="Isolate select" className="w-6">
        <Icon className="size-4">
          <path d="M1 2h15v12H1z" stroke="#5cc070" strokeWidth="1.500" strokeDasharray="2.500 2" />
          <Cursor x={10} y={7} />
        </Icon>
      </PanelTool>
      <Separator />
      <PanelTool label="X-ray">
        <Icon className="size-4">
          <path d="M0 0h20v20H0z" fill="#2a2a2a" />
          <Cube />
        </Icon>
      </PanelTool>
      <PanelTool label="X-ray active components">
        <Icon className="size-4">
          <path d="M0 0h20v20H0z" fill="#2a2a2a" />
          <path d="M3 7h10v10H3zM7 3h10v10H7z" stroke="#bbb" strokeWidth="1.400" />
        </Icon>
      </PanelTool>
      <PanelTool label="X-ray joints">
        <Icon className="size-4">
          <path d="M0 0h20v20H0z" fill="#2a2a2a" />
          <path d="M16 4L5 9l11 6" stroke="#ddd" strokeWidth="2" />
          <g fill="#ddd">
            <circle cx="15.500" cy="4.500" r="2.500" />
            <circle cx="5" cy="9.500" r="3" />
            <circle cx="15.500" cy="15.500" r="2.500" />
          </g>
        </Icon>
      </PanelTool>
    </div>
  );
}

function Viewport() {
  const steps = [0, 1, 2, 3, 4, 5, 6];
  return (
    <div className="relative flex-1 overflow-hidden bg-[linear-gradient(180deg,#8195ac_0%,#6f8194_20%,#475666_50%,#343c46_75%,#25282c_100%)]">
      <svg className="absolute inset-0 size-full" fill="none" aria-hidden="true">
        <g stroke="#8d98a4" strokeWidth="1" opacity=".55">
          {steps.map((i) => (
            <path key={`a${i}`} d={`M${187 + i * 14} ${363 + i * 9.5}l110 ${-40 - i * 2}`} />
          ))}
          {steps.map((i) => (
            <path key={`b${i}`} d={`M${187 + i * 16} ${363 - i * 6}l110 ${74 - i * 2}`} />
          ))}
        </g>
      </svg>
      <div className="-mt-1 w-[325px] pl-[15px] font-['Liberation_Mono',monospace] text-[11px] leading-5 font-bold text-[#0b3b20]">
        {hudRows.map((name) => (
          <div key={name} className="flex">
            <span className="w-[108px]">{name}</span>
            <span className="w-[65px] text-white">0</span>
            <span className="w-[65px] text-white">0</span>
            <span className="text-white">0</span>
          </div>
        ))}
      </div>
    </div>
  );
}

/* ---------- open dialog ---------- */

function FolderIcon() {
  return (
    <Icon className="h-4 w-[14px]" box="0 0 14 16">
      <path d="M0 1h7l1 14H0z" fill="#f0dd82" />
      <path d="M5 1h8v6l1 2v6H7z" fill="#d9bd4f" />
      <path d="M7.500 3v12" stroke="#b8982f" />
      <path d="M2 2v12M10 2v12" stroke="#fbf0b0" />
    </Icon>
  );
}

function PageIcon() {
  return (
    <Icon className="h-4 w-[14px]" box="0 0 14 16">
      <path d="M1 0h9l3 3v12H1z" fill="#fbfbfb" />
      <path d="M10 0v3h3z" fill="#9a9a9a" />
      <path d="M1 15.500h12" stroke="#8a8a8a" />
    </Icon>
  );
}

function FbxIcon() {
  return (
    <Icon className="h-4 w-[15px]" box="0 0 15 16">
      <path d="M.5 15.500V1.500h10l4 4v10z" fill="#3a3a3a" stroke="#9a9a9a" />
      <path d="M10 1v4h4z" fill="#9a9a9a" />
      <path d="M0 8h15v7H0z" fill="#e6e6e6" />
      <text
        x="7.500"
        y="14"
        textAnchor="middle"
        fontSize="7"
        fontWeight="700"
        fontFamily="DejaVu Sans, sans-serif"
        fill="#111"
      >
        FBX
      </text>
    </Icon>
  );
}

function FileIcon({ name }: { name: string }) {
  if (name.endsWith(".meta")) return <PageIcon />;
  if (name.endsWith(".fbx")) return <FbxIcon />;
  return <FolderIcon />;
}

function FileList() {
  return (
    <div className="flex min-w-0 flex-1 border-2 border-[#5b7389] bg-[#2a2a2a] pt-px">
      {fileColumns.map((column, i) => (
        <ul key={i} className="w-[181px]">
          {column.map((name) => (
            <li
              key={name}
              className={clsx(
                "flex h-4 items-center whitespace-nowrap",
                name === "Zn.fbx" && "bg-[#678db2] text-white",
              )}
            >
              <span
                className={clsx(
                  "flex w-[18px] shrink-0 justify-center",
                  name === "Zn.fbx" && "opacity-60",
                )}
              >
                <FileIcon name={name} />
              </span>
              {name}
            </li>
          ))}
        </ul>
      ))}
    </div>
  );
}

const bookmarks: { name: string; icon: ReactNode }[] = [
  {
    name: "My Computer",
    icon: <path d="M1 1h10v7H1zM4 9h4v3H4z" fill="#8fc3ec" stroke="#cfe2f0" strokeWidth=".8" />,
  },
  {
    name: "Desktop",
    icon: (
      <>
        <path d="M0 1h12v9H0z" fill="#2f62b8" />
        <path d="M0 1h12L3 9H0zM0 10h12v2H0z" fill="#7eaee6" />
      </>
    ),
  },
  {
    name: "Documents",
    icon: (
      <>
        <path d="M0 0h6v12H0z" fill="#ecd877" />
        <path d="M5 1h6v10H5z" fill="#dfeaf4" stroke="#7794ad" strokeWidth=".8" />
      </>
    ),
  },
  {
    name: "Administrator",
    icon: (
      <>
        <path d="M0 0h8v12H0z" fill="#dcc45e" />
        <circle cx="8" cy="6" r="2" fill="#e5c09a" />
        <path d="M5 12c0-5 6-5 6 0z" fill="#5d9a60" />
      </>
    ),
  },
];

function PlacesColumn() {
  return (
    <div className="flex w-[122px] shrink-0 flex-col">
      <h2 className="h-[18px] leading-4">Folder Bookmarks:</h2>
      <ul className="h-[115px] border border-[#383838] bg-[#2a2a2a] px-[2px] pt-[2px]">
        {bookmarks.map((item) => (
          <li key={item.name} className="flex h-[13px] items-center gap-[2px]">
            <Icon className="size-3" box="0 0 12 12">
              {item.icon}
            </Icon>
            {item.name}
          </li>
        ))}
      </ul>
      <span className="mx-auto mt-1 h-1 w-10 bg-[radial-gradient(circle,#777_1px,transparent_1px)] bg-[size:5px_4px]" />
      <label htmlFor="project" className="h-[18px] leading-4">
        Current Project:
      </label>
      <Combo id="project" label="Current Project" value="J:/NanKaiDaXue" className="h-[22px]" />
      <ul className="mt-[7px] h-[243px] border border-[#383838] bg-[#2a2a2a] px-[2px] pt-[2px]">
        {projectFolders.map((name) => (
          <li key={name} className="flex h-[13px] items-center gap-[2px]">
            <Icon className="size-3" box="0 0 12 12">
              <path d="M1 2h4l1 1h5v7H1z" fill="#6aa7dc" />
              <path d="M1 4h10v6H1z" fill="#9ccbf2" />
            </Icon>
            {name}
          </li>
        ))}
      </ul>
      <PushButton className="mt-2 h-6">Set Project...</PushButton>
    </div>
  );
}

function PushButton({ className, children }: { className?: string; children: ReactNode }) {
  return (
    <button
      type="button"
      className={clsx(
        "shrink-0 rounded-xs border border-[#2c2c2c] bg-linear-to-b from-[#666] to-[#535353]",
        className,
      )}
    >
      {children}
    </button>
  );
}

function SectionHeader({ title, open }: { title: string; open?: boolean }) {
  return (
    <button
      type="button"
      aria-expanded={!!open}
      className="flex h-[21px] w-full items-center border border-[#2f2f2f] border-t-[#5c5c5c] border-l-[#5c5c5c] bg-[#4b4b4b] pl-[7px] text-left font-['Noto_Sans',sans-serif] font-bold"
    >
      <span className="w-6">
        <svg className="size-[10px]" viewBox="0 0 10 10" aria-hidden="true">
          <path d={open ? "M0 2h10L5 7z" : "M2 0v10l5-5z"} fill="#d8d8d8" />
        </svg>
      </span>
      {title}
    </button>
  );
}

function CheckRow({ label, checked }: { label: string; checked?: boolean }) {
  return (
    <label className="flex h-[19px] items-center pl-[150px]">
      <span className="relative mr-1 flex size-[13px]">
        <input
          type="checkbox"
          defaultChecked={checked}
          className="peer size-[13px] appearance-none rounded-xs border border-[#333] bg-[#282828]"
        />
        <svg
          className="pointer-events-none absolute inset-0 hidden size-[13px] peer-checked:block"
          viewBox="0 0 13 13"
          fill="none"
          aria-hidden="true"
        >
          <path d="M3 6.500l2.500 3.500L11 3" stroke="#e8e8e8" strokeWidth="2" />
        </svg>
      </span>
      {label}
    </label>
  );
}

function OptionsPanel() {
  const box = "border border-[#2f2f2f] border-r-[#5c5c5c] border-b-[#5c5c5c]";
  return (
    <fieldset className="mt-px mb-[5px] flex w-[435px] shrink-0 flex-col rounded-xs border border-[#2e2e2e] px-[11px] pb-3">
      <legend className="-ml-1 leading-[14px]">Options...</legend>
      <div className="mt-[10px] flex-1 rounded-xs border border-[#2c2c2c]">
        <div className="m-[2px] border border-[#2c2c2c] border-t-[#585858] px-[10px] pt-[5px] pb-1">
          <SectionHeader title="General Options" open />
          <div className={clsx("h-[51px] pt-[6px]", box)}>
            <CheckRow label="Execute script nodes" checked />
            <CheckRow label="Ignore Version" />
          </div>
          <div className="h-[5px]" />
          <SectionHeader title="Referencing" open />
          <div className={clsx("h-[54px] pt-[6px]", box)}>
            <div className="flex h-[22px] items-center">
              <label htmlFor="load-settings" className="w-[150px] pr-1 text-right">
                Load Settings
              </label>
              <Combo
                id="load-settings"
                label="Load Settings"
                value="Load default references"
                className="h-5 w-[174px]"
              />
            </div>
            <CheckRow label="Selective preload" />
          </div>
          <div className="h-[5px]" />
          <SectionHeader title="File Type Specific Options" />
        </div>
      </div>
    </fieldset>
  );
}

const navButtons: { label: string; icon: ReactNode; pressed?: boolean }[] = [
  { label: "Back", icon: <path d="M2 8l6-5v3h6v4H8v3z" fill="#b5b5b5" /> },
  { label: "Forward", icon: <path d="M14 8L8 3v3H2v4h6v3z" fill="#b5b5b5" /> },
  { label: "Parent directory", icon: <path d="M8 1l7 7h-4v6H5V8H1z" fill="#7fbdf0" stroke="#1d2f42" /> },
  {
    label: "Create new folder",
    icon: (
      <>
        <path d="M1 6h5l1 2h7v7H1z" fill="#e8c95e" />
        <path d="M12 0v8M8 4h8M9 1l6 6M15 1L9 7" stroke="#d8d83a" strokeWidth=".9" />
      </>
    ),
  },
  {
    label: "List view",
    pressed: true,
    icon: (
      <>
        <path d="M2 1h12v14H2z" fill="#f0f0f0" />
        <path d="M5 4h7M5 7h7M5 10h7M5 13h7" stroke="#444" />
      </>
    ),
  },
  {
    label: "Detail view",
    icon: (
      <>
        <path d="M2 1h13v14H2z" fill="#f0f0f0" />
        <path d="M7 3h7M7 6h7M7 9h7M7 12h7" stroke="#444" />
        <path d="M4.500 2v12" stroke="#3b6ea5" strokeWidth="2" strokeDasharray="1.500 1.500" />
      </>
    ),
  },
];

function DialogTitleBar() {
  return (
    <header className="flex h-[26px] shrink-0 items-start justify-between bg-[linear-gradient(100deg,#8ba4bc_0%,#b9c8d6_4%,#a2b6c9_8%,#7897b5_14%,#5f84a8_22%,#5b80a5_50%,#6f90af_56%,#6888a8_82%,#a6bccf_92%,#8fa9c2_100%)]">
      <h1 className="flex items-center gap-[7px] self-center pl-2 font-['Open_Sans',sans-serif] text-[13px] leading-4 text-black">
        <Icon className="h-4 w-3" box="0 0 12 16">
          <path d="M0 0h12v16H0z" fill="#1e2b33" />
          <path d="M3 5c1-4 7-3 6 1s-6 3-4 6 5 1 4-1M4 4l3 8M8 3L5 10" stroke="#a9bcc4" />
        </Icon>
        Open
      </h1>
      <div className="flex h-[18px] shrink-0">
        <button
          type="button"
          aria-label="Help"
          className="w-[29px] rounded-bl-md border border-t-0 border-[#33475a] bg-linear-to-b from-[#b9c7d4] to-[#7890a6] text-[13px] leading-4 font-bold text-white [text-shadow:0_0_2px_#000]"
        >
          ?
        </button>
        <button
          type="button"
          aria-label="Close"
          className="flex w-[38px] items-center justify-center border-b border-[#4a1511] bg-linear-to-b from-[#e2897c] to-[#b92f1d] pl-2"
        >
          <svg className="h-[10px] w-3" viewBox="0 0 12 10" fill="none" aria-hidden="true">
            <path d="M2 1l8 8M10 1L2 9" stroke="#53201b" strokeWidth="4" />
            <path d="M2 1l8 8M10 1L2 9" stroke="#fff" strokeWidth="2.500" />
          </svg>
        </button>
      </div>
    </header>
  );
}

function OpenDialog() {
  return (
    <section
      role="dialog"
      aria-label="Open"
      className="absolute top-[184px] right-0 bottom-0 left-[325px] flex flex-col overflow-hidden rounded-tl-lg border-t border-l border-[#0e1a26] bg-[linear-gradient(180deg,#9fb6cb_0,#c9d5e0_110px,#e2e9ef_168px,#47637f_172px,#54718d_300px,#2f4960_100%)] shadow-[0_0_8px_#000a]"
    >
      <div className="flex flex-1 flex-col border-t border-[#dbe7f2]">
        <DialogTitleBar />
        <div className="ml-[5px] flex flex-1 flex-col border-t border-l border-[#cfdbe6] bg-[#444] pt-[13px] pl-[10px]">
          <div className="flex h-5 shrink-0 items-center">
            <span className="w-[71px] shrink-0">Look in:</span>
            <div className="flex h-[21px] min-w-0 flex-1 items-center border border-[#383838] bg-[#2a2a2a] pl-[5px]">
              <FolderIcon />
              <input
                type="text"
                aria-label="Look in"
                defaultValue="D:\Project_Files\Unity\YuanWenJian\NanKaiDaXue\DianDongShi\Assets\Scenes\MoXing\DianDongShi"
                className="min-w-0 flex-1 bg-transparent pl-[3px] outline-none"
              />
              <button
                type="button"
                aria-label="Show path history"
                className="flex h-5 w-4 items-center justify-center bg-[#666]"
              >
                <svg className="h-1 w-2" viewBox="0 0 8 4" aria-hidden="true">
                  <path d="M0 0h8L4 4z" fill="#ddd" />
                </svg>
              </button>
            </div>
            <div className="ml-[3px] flex shrink-0">
              {navButtons.map((button) => (
                <button
                  key={button.label}
                  type="button"
                  title={button.label}
                  aria-label={button.label}
                  className="flex w-[26px] justify-center"
                >
                  <span
                    className={clsx(
                      "flex size-5 items-center justify-center",
                      button.pressed && "border border-[#2a2a2a] bg-[#555]",
                    )}
                  >
                    <Icon className="size-4" box="0 0 16 16">
                      {button.icon}
                    </Icon>
                  </span>
                </button>
              ))}
            </div>
          </div>

          <div className="mt-[7px] mr-1 ml-[2px] flex h-[464px] shrink-0">
            <PlacesColumn />
            <div className="flex w-2 shrink-0 items-center justify-center">
              <span className="h-[180px] w-1 bg-[radial-gradient(circle,#333_1px,transparent_1px)] bg-[size:4px_5px]" />
            </div>
            <FileList />
            <div className="flex w-[6px] shrink-0 items-center justify-center">
              <span className="h-[180px] w-1 bg-[radial-gradient(circle,#333_1px,transparent_1px)] bg-[size:4px_5px]" />
            </div>
            <OptionsPanel />
          </div>

          <div className="flex h-3 shrink-0 justify-end pr-[140px]">
            <span className="h-1 w-[150px] bg-[radial-gradient(circle,#777_1px,transparent_1px)] bg-[size:5px_4px]" />
          </div>

          <div className="mr-1 grid grid-cols-[71px_1fr_74px] items-center gap-y-[7px]">
            <label htmlFor="file-name">File name:</label>
            <input
              id="file-name"
              type="text"
              defaultValue="Zn.fbx"
              className="mr-3 h-5 border border-[#383838] bg-[#2a2a2a] px-[2px] outline-none"
            />
            <PushButton className="h-[23px]">Open</PushButton>
            <label htmlFor="file-type">Files of type:</label>
            <Combo id="file-type" label="Files of type" value="All Files" className="mr-3 h-5" />
            <PushButton className="h-[23px]">Cancel</PushButton>
          </div>
        </div>
      </div>
    </section>
  );
}

/* ---------- hand-drawn marks ---------- */

function Marks() {
  return (
    <svg className="pointer-events-none absolute inset-0 size-full" fill="none" aria-hidden="true">
      <g fill="#fb2418">
        <path d="M159 43l9 16h-5l-3 175h-2l-3-175h-5z" />
        <path d="M851 568l14-8v4l122 7-122 2v4z" />
        <path d="M1202 631l67 56 10-4 5 24-21-3 3-5z" />
      </g>
      <g stroke="#e8281e" strokeWidth="3" strokeLinecap="round" strokeLinejoin="round">
        <path d="M191 102c-3 20 0 40 2 70" />
        <path d="M814 488c9-1 17 4 18 12v18l-25 10 64 1" />
        <path d="M1196 694c14-2 26-1 26 6v10l-10 4h33l-9 10M1207 745c8-8 18-9 30-13" />
      </g>
    </svg>
  );
}

export default function App() {
  return (
    <div className="relative flex h-screen flex-col overflow-hidden bg-[#444] font-[Lato,sans-serif] text-[11px] leading-[14px] text-[#c8c8c8]">
      <div className="h-px shrink-0 bg-[#b4d0e0]" />
      <nav className="flex h-[19px] shrink-0 items-center gap-[14px] pt-[3px] pl-2 whitespace-nowrap">
        {mainMenu.map((item) => (
          <button key={item} type="button">
            {item}
          </button>
        ))}
      </nav>
      <StatusLine />
      <Shelf />
      <div className="flex min-h-0 flex-1">
        <Toolbox />
        <main className="mt-[6px] flex min-w-0 flex-1 flex-col border-t border-l border-[#777]">
          <nav className="flex h-[18px] shrink-0 items-center gap-[15px] pl-[7px]">
            {panelMenu.map((item) => (
              <button key={item} type="button">
                {item}
              </button>
            ))}
          </nav>
          <PanelToolbar />
          <Viewport />
        </main>
      </div>
      <OpenDialog />
      <Marks />
      <p className="pointer-events-none absolute right-9 bottom-9 font-['Noto_Sans_CJK_SC',sans-serif] text-[40px] leading-[48px] whitespace-pre text-white [text-shadow:1px_2px_3px_#000a]">
        知乎 @可可
      </p>
    </div>
  );
}
